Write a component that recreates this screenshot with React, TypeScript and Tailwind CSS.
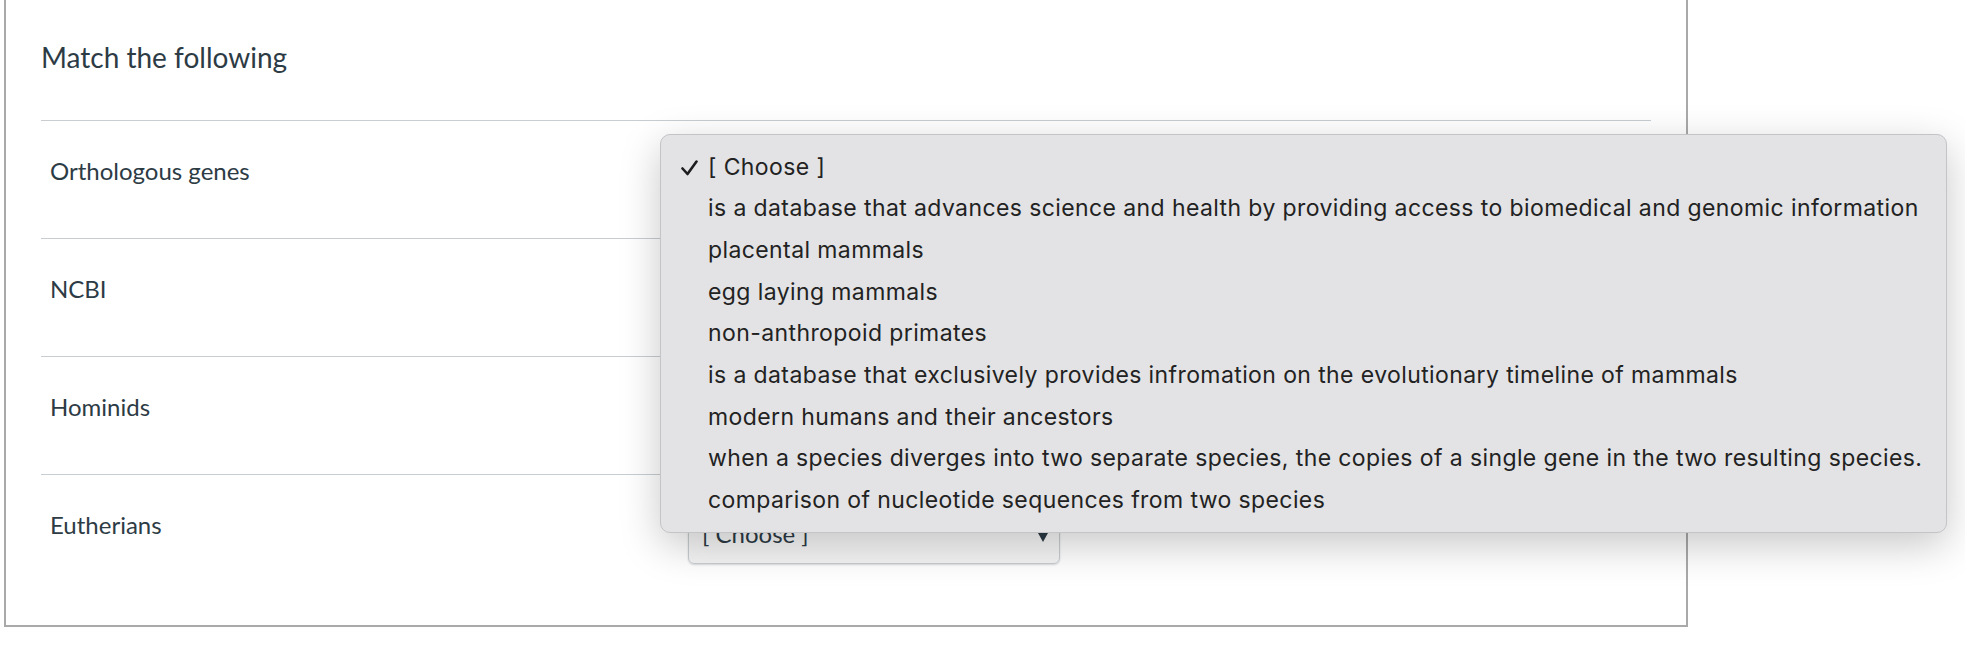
import React from "react";

const ROWS = ["Orthologous genes", "NCBI", "Hominids", "Eutherians"];

const OPTIONS = [
  "[ Choose ]",
  "is a database that advances science and health by providing access to biomedical and genomic information",
  "placental mammals",
  "egg laying mammals",
  "non-anthropoid primates",
  "is a database that exclusively provides infromation on the evolutionary timeline of mammals",
  "modern humans and their ancestors",
  "when a species diverges into two separate species, the copies of a single gene in the two resulting species.",
  "comparison of nucleotide sequences from two species",
];

function Check() {
  return (
    <svg width="17" height="16" viewBox="0 0 17 16" className="absolute left-[20px] top-[14px]">
      <path d="M1.5 8.5 L6.5 14 L15.5 1.5" fill="none" stroke="#1d1d1f" strokeWidth="2.6" strokeLinecap="round" strokeLinejoin="round" />
    </svg>
  );
}

function Select() {
  return (
    <div className="ml-auto mr-[591px] flex h-[60px] w-[372px] items-center justify-between rounded-[6px] border border-[#c7cdd1] bg-gradient-to-b from-white to-[#f4f4f4] pl-[13px] pr-[11px] text-[24px] text-[#2d3b45] shadow-[0_1px_2px_rgba(0,0,0,0.15)]">
      <span>[ Choose ]</span>
      <svg width="10" height="9" viewBox="0 0 10 9" className="mt-[8px]">
        <path d="M0 0 H10 L5 9 Z" fill="#2d3b45" />
      </svg>
    </div>
  );
}

export default function App() {
  return (
    <div className="relative h-[657px] w-[1965px] overflow-hidden bg-white font-['Lato',sans-serif]">
      <div className="ml-[4px] w-[1684px] border-2 border-t-0 border-[#a9a9a9] px-[35px] pb-[33px] pt-[40px]">
        <h2 className="text-[28px] leading-[34px] text-[#2d3b45]">Match the following</h2>
        <div className="mt-[46px]">
          {ROWS.map((row) => (
            <div key={row} className="flex h-[118px] items-center border-t border-[#c7cdd1]">
              <span className="pb-[19px] pl-[9px] text-[24px] leading-[29px] text-[#2d3b45]">{row}</span>
              <Select />
            </div>
          ))}
        </div>
      </div>

      <div className="absolute left-[660px] top-[134px] w-[1287px] rounded-[10px] border border-[#c4c4c6] bg-[#e3e3e5] py-[11px] font-['Inter',sans-serif] text-[23px] tracking-[0.4px] text-[#222222] shadow-[0_12px_40px_rgba(0,0,0,0.22)]">
        {OPTIONS.map((opt, i) => (
          <div key={opt} className="relative flex h-[41.7px] items-center pl-[47px] whitespace-nowrap">
            {i === 0 && <Check />}
            {opt}
          </div>
        ))}
      </div>
    </div>
  );
}
